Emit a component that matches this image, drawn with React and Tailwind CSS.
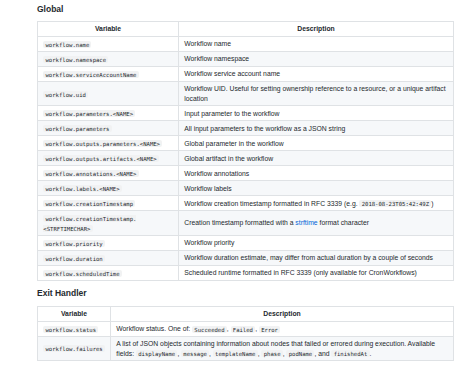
const C = ({ children }) => (
  <code className="font-['DejaVu_Sans_Mono',monospace] text-[5.6px] leading-none bg-[#f1f2f3] px-[2.2px] py-[0.5px] rounded-[2px]">
    {children}
  </code>
)

const globals = [
  ['workflow.name', 'Workflow name'],
  ['workflow.namespace', 'Workflow namespace'],
  ['workflow.serviceAccountName', 'Workflow service account name'],
  ['workflow.uid', 'Workflow UID. Useful for setting ownership reference to a resource, or a unique artifact location'],
  ['workflow.parameters.<NAME>', 'Input parameter to the workflow'],
  ['workflow.parameters', 'All input parameters to the workflow as a JSON string'],
  ['workflow.outputs.parameters.<NAME>', 'Global parameter in the workflow'],
  ['workflow.outputs.artifacts.<NAME>', 'Global artifact in the workflow'],
  ['workflow.annotations.<NAME>', 'Workflow annotations'],
  ['workflow.labels.<NAME>', 'Workflow labels'],
  [
    'workflow.creationTimestamp',
    <>Workflow creation timestamp formatted in RFC 3339 (e.g. <C>2018-08-23T05:42:49Z</C>)</>,
  ],
  [
    'workflow.creationTimestamp.<STRFTIMECHAR>',
    <>
      Creation timestamp formatted with a <a className="text-[#0366d6]">strftime</a> format character
    </>,
  ],
  ['workflow.priority', 'Workflow priority'],
  ['workflow.duration', 'Workflow duration estimate, may differ from actual duration by a couple of seconds'],
  ['workflow.scheduledTime', 'Scheduled runtime formatted in RFC 3339 (only available for CronWorkflows)'],
]

const exits = [
  [
    'workflow.status',
    <>
      Workflow status. One of: <C>Succeeded</C>, <C>Failed</C>, <C>Error</C>
    </>,
  ],
  [
    'workflow.failures',
    <>
      A list of JSON objects containing information about nodes that failed or errored during execution. Available
      fields: <C>displayName</C>, <C>message</C>, <C>templateName</C>, <C>phase</C>, <C>podName</C>, and{' '}
      <C>finishedAt</C>.
    </>,
  ],
]

const cell = 'border border-[#dfe2e5] px-[5.3px] py-[2.3px] leading-[9.4px] align-middle'

function VarTable({ rows, firstCol }) {
  return (
    <table className="w-[417px] border-collapse table-fixed text-[6.8px]">
      <colgroup>
        <col className={firstCol} />
        <col />
      </colgroup>
      <thead>
        <tr className="bg-white">
          <th className={`${cell} font-bold text-center`}>Variable</th>
          <th className={`${cell} font-bold text-center`}>Description</th>
        </tr>
      </thead>
      <tbody>
        {rows.map(([v, d], i) => (
          <tr key={v} className={i % 2 ? 'bg-[#f6f8fa]' : 'bg-white'}>
            <td className={cell}>
              <C>{v}</C>
            </td>
            <td className={cell}>{d}</td>
          </tr>
        ))}
      </tbody>
    </table>
  )
}

export default function App() {
  return (
    <div className="min-h-screen bg-white text-[#24292e] font-['Liberation_Sans',Arial,sans-serif]">
      <div className="pl-[37px] pt-[4px]">
        <h3 className="text-[8.5px] leading-[10px] font-bold">Global</h3>
        <div className="mt-[7px]">
          <VarTable rows={globals} firstCol="w-[141px]" />
        </div>
        <h3 className="mt-[7px] text-[8.5px] leading-[10px] font-bold">Exit Handler</h3>
        <div className="mt-[8px]">
          <VarTable rows={exits} firstCol="w-[73px]" />
        </div>
      </div>
    </div>
  )
}
